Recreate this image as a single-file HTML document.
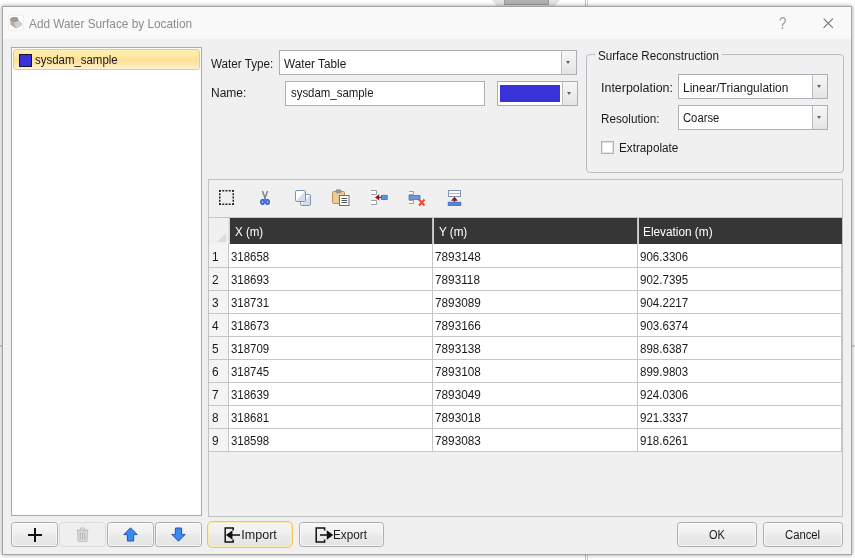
<!DOCTYPE html>
<html><head><meta charset="utf-8"><title>Add Water Surface by Location</title>
<style>
*{box-sizing:border-box;margin:0;padding:0}
html,body{width:855px;height:560px;overflow:hidden;background:#fff}
body{font-family:"Liberation Sans",sans-serif;font-size:12.5px;color:#1a1a1a}
#root{position:absolute;left:0;top:0;width:855px;height:560px;will-change:transform}
.abs{position:absolute}
#dlg{left:2px;top:6px;width:850px;height:549px;background:#f0f0f0;border:1px solid #a6a6a6;box-shadow:0 0 4px rgba(0,0,0,.42)}
#title{left:3px;top:7px;width:848px;height:32px;background:#f9f9f9}
.t{position:absolute;white-space:nowrap;line-height:16px;transform-origin:0 0}
.box{position:absolute;background:#fff;border:1px solid #abb0b8}
.btn{position:absolute;border:1px solid #a9aeb6;border-radius:3.5px;background:linear-gradient(#f5f5f5,#f0f0f0 44%,#e9e9e9 56%,#e5e5e5);height:25px;top:522px;box-shadow:inset 0 0 0 1px rgba(255,255,255,.6)}
.combo{position:absolute;background:#fff;border:1px solid #abb0b8;height:25px}
.dd{position:absolute;right:0;top:0;bottom:0;width:15px;border-left:1px solid #b9bdc4;background:linear-gradient(#f6f6f6,#eee 50%,#e4e4e4)}
.dd:after{content:"";position:absolute;left:4.2px;top:9.6px;border:2.8px solid transparent;border-top:3.3px solid #606060;border-bottom:0}
table{position:absolute;left:209px;top:218px;border-collapse:separate;border-spacing:0;table-layout:fixed;width:633px}
td,th{height:23px;padding:1px 0 0 2px;text-align:left;font-weight:normal;font-size:12.5px;overflow:hidden;white-space:nowrap;background:#fff;border-right:1px solid #c6c6c6;border-bottom:1px solid #c6c6c6}
tr.r1 td{height:24px}
th{background:#363636;height:26px;border:0;border-left:1px solid #d2d2d2;border-right:1px solid #bdbdbd;padding:0}
th.last{border-right:0}
td.rh{background:#f4f4f4;padding-left:3px}
th.rh{background:#f0f0f0;border-left:0;border-right:1px solid #e4e4e4}
td span{display:inline-block;transform-origin:0 50%;position:relative;top:.8px}
</style></head><body><div id="root">
<!-- background artifacts behind dialog -->
<div class="abs" style="left:485px;top:-64px;width:82px;height:82px;background:#e4e4e4;border-radius:50%"></div>
<div class="abs" style="left:504px;top:0;width:45px;height:5px;background:#b2b2b2;border:1px solid #9c9c9c;border-top:0"></div>
<div class="abs" style="left:585px;top:0;width:3px;height:6px;background:#fff;border-left:1px solid #c2c2c2;border-right:1px solid #d4d4d4"></div>
<div class="abs" style="left:585px;top:555px;width:3px;height:5px;background:#fff;border-left:1px solid #c2c2c2;border-right:1px solid #d4d4d4"></div>

<div class="abs" style="left:0;top:345px;width:855px;height:2px;background:#d3d7dd"></div>
<div id="dlg" class="abs"></div>
<div id="title" class="abs"></div>
<!-- app icon -->
<div class="abs" style="left:8px;top:15px;width:16px;height:16px;border-radius:2px;background:#fcfcfc;border:1px solid #eee"></div>
<svg class="abs" style="left:9px;top:16px" width="14" height="14" viewBox="0 0 14 14"><path d="M1.2 2.9 Q3 0.8 5.8 1.1 Q8.6 1 8.9 2.2 L9.7 4.9 L13 7 V9.3 L7 12.5 L1.4 8.7Z" fill="#b2b2b2"/><path d="M1.2 2.9 Q3 0.8 5.8 1.1 Q8.6 1 8.9 2.2 L9.7 4.9 L5 6.6 L1.2 4.6Z" fill="#9b9b9b"/><path d="M5 6.6 L9.7 4.9 L13 7 V9.3 L7 12.5Z" fill="#cfcfcf"/><path d="M2 5 L6.2 11.3" stroke="#f2a273" stroke-width=".9" fill="none"/></svg>
<div class="t" style="left:778.6px;top:14.1px;font-size:16px;color:#9a9a9a;line-height:20px;transform:scaleX(.82)">?</div>
<svg class="abs" style="left:823px;top:18px" width="11" height="11" viewBox="0 0 11 11"><path d="M0.6 0.6 L9.9 9.8 M9.9 0.6 L0.6 9.8" stroke="#777" stroke-width="1.15" fill="none"/></svg>

<!-- left list -->
<div class="box" style="left:11px;top:47px;width:191px;height:469px;border-color:#a3abb7"></div>
<div class="abs" style="left:13px;top:49px;width:187px;height:21px;border:1px solid #e6cb8a;border-radius:3px;background:linear-gradient(#ffeeae 0%,#feeaa6 28%,#fde098 52%,#fde7ad 75%,#fdf2d2 100%)"></div>
<div class="abs" style="left:19px;top:54px;width:13px;height:13px;background:#3832d8;border:1px solid #14143a"></div>

<!-- left bottom buttons -->
<div class="btn" style="left:11px;width:47px"></div>
<div class="btn" style="left:59px;width:47px;background:#efefef;border-color:#dcdcdc;box-shadow:none"></div>
<div class="btn" style="left:107px;width:47px"></div>
<div class="btn" style="left:155px;width:47px"></div>
<svg class="abs" style="left:28px;top:528px" width="14" height="14" viewBox="0 0 14 14"><path d="M7 0 V14 M0 7 H14" stroke="#111" stroke-width="2" fill="none"/></svg>
<svg class="abs" style="left:76px;top:527px" width="13" height="15" viewBox="0 0 13 15"><path d="M1.5 3.5 H11.5 L11 14.5 H2Z" fill="#d9d9d9" stroke="#c2c2c2"/><path d="M0.5 3 H12.5 M4.5 2.5 V1 H8.5 V2.5" stroke="#bdbdbd" fill="none"/><path d="M4.3 5.5 V12.5 M6.5 5.5 V12.5 M8.7 5.5 V12.5" stroke="#b5b5b5" fill="none"/></svg>
<svg class="abs" style="left:123px;top:527px" width="15" height="15" viewBox="0 0 15 15"><path d="M7.5 0.8 L14.2 7.6 H10.6 V14 H4.4 V7.6 H0.8Z" fill="#3a8af0" stroke="#1c58b8" stroke-width="1" stroke-linejoin="round"/></svg>
<svg class="abs" style="left:171px;top:527px" width="15" height="15" viewBox="0 0 15 15"><path d="M7.5 14.2 L14.2 7.4 H10.6 V1 H4.4 V7.4 H0.8Z" fill="#3a8af0" stroke="#1c58b8" stroke-width="1" stroke-linejoin="round"/></svg>

<!-- water type / name -->
<div class="combo" style="left:279px;top:50px;width:298px"><div class="dd"></div></div>
<div class="box" style="left:285px;top:81px;width:200px;height:25px"></div>
<div class="box" style="left:497px;top:81px;width:81px;height:25px;border-color:#a9aeb6"><div class="abs" style="left:2px;top:3px;width:60px;height:17px;background:#3832d8"></div><div class="dd"></div></div>

<!-- group box -->
<div class="abs" style="left:586px;top:54px;width:258px;height:119px;border:1px solid #b7bcc4;border-radius:4px"></div>
<div class="abs" style="left:595px;top:50px;width:127px;height:10px;background:#f0f0f0"></div>
<div class="t" style="left:597.60px;top:47.72px;font-size:12.5px;color:#1a1a1a;transform:scaleX(0.9315);">Surface Reconstruction</div>
<div class="combo" style="left:678px;top:74px;width:150px"><div class="dd"></div></div>
<div class="combo" style="left:678px;top:105px;width:150px"><div class="dd"></div></div>
<div class="abs" style="left:601px;top:141px;width:13px;height:13px;background:#fff;border:1px solid #b3b3b3;box-shadow:inset 0 0 0 1px #e4e4e4"></div>

<!-- table panel -->
<div class="abs" style="left:208px;top:179px;width:635px;height:338px;border:1px solid #c2c2c2;background:#f0f0f0"></div>
<div class="abs" style="left:209px;top:217px;width:633px;height:1px;background:#c6c6c6"></div>
<!-- toolbar icons -->
<svg class="abs" style="left:219px;top:190px" width="15" height="15" viewBox="0 0 15 15"><path d="M0 0.75 H15 M0 14.25 H15" stroke="#222" stroke-width="1.5" stroke-dasharray="2 1.25" fill="none"/><path d="M0.75 0 V15 M14.25 0 V15" stroke="#222" stroke-width="1.5" stroke-dasharray="2 1.25" fill="none"/></svg>
<svg class="abs" style="left:259px;top:190px" width="12" height="16" viewBox="0 0 12 16"><path d="M3.4 1 L7 10.5 M8.6 1 L5 10.5" stroke="#7b8592" stroke-width="1.5" fill="none"/><ellipse cx="3.5" cy="12" rx="1.7" ry="2.2" fill="#8fb0ee" stroke="#2a5cd0" stroke-width="1.5"/><ellipse cx="8.5" cy="12" rx="1.7" ry="2.2" fill="#8fb0ee" stroke="#2a5cd0" stroke-width="1.5"/></svg>
<svg class="abs" style="left:295px;top:190px" width="16" height="16" viewBox="0 0 16 16"><rect x="5.5" y="4.5" width="10" height="11" rx="1.5" fill="#fff" stroke="#7f93b5"/><path d="M15 5 V15 H6Z" fill="#d5dcea"/><rect x="0.5" y="0.5" width="10" height="11" rx="1.5" fill="#fff" stroke="#7f93b5"/><path d="M10 1 V11 H1Z" fill="#d5dcea"/></svg>
<svg class="abs" style="left:332px;top:189px" width="18" height="17" viewBox="0 0 18 17"><rect x="0.5" y="2.5" width="12" height="12" rx="1" fill="#eccb94" stroke="#b89452"/><rect x="4" y="0.8" width="5" height="3" rx="1" fill="#9a9a9a" stroke="#777" stroke-width=".6"/><rect x="7.5" y="6.5" width="9.5" height="10" fill="#fff" stroke="#6e6e6e"/><path d="M9.5 9.5 H15 M9.5 11.5 H15 M9.5 13.5 H15" stroke="#555" stroke-width="1"/></svg>
<svg class="abs" style="left:370px;top:189px" width="18" height="17" viewBox="0 0 18 17"><path d="M1 1.5 H6.5 V5.5 H1" fill="#fff" stroke="#9aa0aa"/><path d="M1 11.5 H6.5 V15.5 H1" fill="#fff" stroke="#9aa0aa"/><rect x="11.5" y="6.3" width="5.7" height="4.2" fill="#5b8fe0" stroke="#3b6cc0" stroke-width=".8"/><path d="M11.5 8.4 H7.5 M8.6 6.4 L6 8.4 L8.6 10.4Z" stroke="#8a1a1a" stroke-width="1.2" fill="#8a1a1a"/></svg>
<svg class="abs" style="left:408px;top:190px" width="18" height="17" viewBox="0 0 18 17"><path d="M1 1.5 H5.5 V4.5 H1" fill="#fff" stroke="#9aa0aa"/><path d="M1 10.5 H5.5 V13.5 H1" fill="#fff" stroke="#9aa0aa"/><rect x="1" y="5.5" width="11" height="4" fill="#6a97e0" stroke="#4a76c4" stroke-width=".8"/><path d="M11 9.5 L16.5 15.5 M16.5 9.5 L11 15.5" stroke="#f04a2a" stroke-width="2" fill="none"/></svg>
<svg class="abs" style="left:447px;top:189px" width="15" height="17" viewBox="0 0 15 17"><rect x="1.5" y="1.5" width="12" height="6" fill="#fff" stroke="#7f93b5"/><path d="M1.5 4.5 H13.5" stroke="#aab6cc"/><rect x="1.2" y="13.2" width="12.6" height="3.3" fill="#4f86e0" stroke="#356cc8" stroke-width=".8"/><path d="M7.5 13 V10 M5.4 11.2 L7.5 8.6 L9.6 11.2Z" stroke="#8a1a1a" stroke-width="1.2" fill="#8a1a1a"/></svg>

<table>
<colgroup><col style="width:20px"><col style="width:204px"><col style="width:205px"><col style="width:204px"></colgroup>
<tr><th class="rh"></th><th></th><th></th><th class="last"></th></tr>
<tr class="r1"><td class="rh"><span style="transform:scaleX(0.950)">1</span></td><td><span style="transform:scaleX(0.916)">318658</span></td><td><span style="transform:scaleX(0.942)">7893148</span></td><td><span style="transform:scaleX(0.924)">906.3306</span></td></tr>
<tr><td class="rh"><span style="transform:scaleX(0.950)">2</span></td><td><span style="transform:scaleX(0.916)">318693</span></td><td><span style="transform:scaleX(0.942)">7893118</span></td><td><span style="transform:scaleX(0.924)">902.7395</span></td></tr>
<tr><td class="rh"><span style="transform:scaleX(0.950)">3</span></td><td><span style="transform:scaleX(0.916)">318731</span></td><td><span style="transform:scaleX(0.942)">7893089</span></td><td><span style="transform:scaleX(0.924)">904.2217</span></td></tr>
<tr><td class="rh"><span style="transform:scaleX(0.950)">4</span></td><td><span style="transform:scaleX(0.916)">318673</span></td><td><span style="transform:scaleX(0.942)">7893166</span></td><td><span style="transform:scaleX(0.924)">903.6374</span></td></tr>
<tr><td class="rh"><span style="transform:scaleX(0.950)">5</span></td><td><span style="transform:scaleX(0.916)">318709</span></td><td><span style="transform:scaleX(0.942)">7893138</span></td><td><span style="transform:scaleX(0.924)">898.6387</span></td></tr>
<tr><td class="rh"><span style="transform:scaleX(0.950)">6</span></td><td><span style="transform:scaleX(0.916)">318745</span></td><td><span style="transform:scaleX(0.942)">7893108</span></td><td><span style="transform:scaleX(0.924)">899.9803</span></td></tr>
<tr><td class="rh"><span style="transform:scaleX(0.950)">7</span></td><td><span style="transform:scaleX(0.916)">318639</span></td><td><span style="transform:scaleX(0.942)">7893049</span></td><td><span style="transform:scaleX(0.924)">924.0306</span></td></tr>
<tr><td class="rh"><span style="transform:scaleX(0.950)">8</span></td><td><span style="transform:scaleX(0.916)">318681</span></td><td><span style="transform:scaleX(0.942)">7893018</span></td><td><span style="transform:scaleX(0.924)">921.3337</span></td></tr>
<tr><td class="rh"><span style="transform:scaleX(0.950)">9</span></td><td><span style="transform:scaleX(0.916)">318598</span></td><td><span style="transform:scaleX(0.942)">7893083</span></td><td><span style="transform:scaleX(0.924)">918.6261</span></td></tr>

</table>
<!-- header corner triangle -->
<svg class="abs" style="left:217px;top:233px" width="9" height="9" viewBox="0 0 9 9"><path d="M9 0 V9 H0Z" fill="#dcdcdc"/></svg>

<!-- bottom buttons -->
<div class="btn" style="left:207px;top:521px;width:86px;height:27px;border:1.6px solid #efc752;border-radius:5px;box-shadow:inset 0 0 0 1px #fbeab0"></div>
<div class="btn" style="left:299px;width:85px"></div>
<div class="btn" style="left:677px;width:80px"></div>
<div class="btn" style="left:763px;width:80px"></div>
<!-- import/export icons -->
<svg class="abs" style="left:224px;top:527px" width="17" height="16" viewBox="0 0 17 16"><path d="M9.2 3.5 V0.9 H1.2 V15.1 H9.2 V12.5" stroke="#111" stroke-width="1.5" fill="none"/><path d="M16 8 H6 M7.6 5 L3.4 8 L7.6 11Z" stroke="#111" stroke-width="1.7" fill="#111" stroke-linejoin="miter"/></svg>
<svg class="abs" style="left:315px;top:527px" width="18" height="16" viewBox="0 0 18 16"><path d="M9.6 3.5 V0.9 H1.2 V15.1 H9.6 V12.5" stroke="#111" stroke-width="1.5" fill="none"/><path d="M5 8 H14 M12.6 5 L16.8 8 L12.6 11Z" stroke="#111" stroke-width="1.7" fill="#111" stroke-linejoin="miter"/></svg>

<div class="t" style="left:28.80px;top:16.25px;font-size:13px;color:#8c8c8c;transform:scaleX(0.9087);">Add Water Surface by Location</div>
<div class="t" style="left:34.84px;top:52.42px;font-size:12.5px;color:#1a1a1a;transform:scaleX(0.9154);">sysdam_sample</div>
<div class="t" style="left:210.77px;top:55.92px;font-size:12.5px;color:#1a1a1a;transform:scaleX(0.9333);">Water Type:</div>
<div class="t" style="left:283.76px;top:55.92px;font-size:12.5px;color:#1a1a1a;transform:scaleX(0.9425);">Water Table</div>
<div class="t" style="left:210.64px;top:85.42px;font-size:12.5px;color:#1a1a1a;transform:scaleX(0.9612);">Name:</div>
<div class="t" style="left:290.54px;top:85.42px;font-size:12.5px;color:#1a1a1a;transform:scaleX(0.9132);">sysdam_sample</div>
<div class="t" style="left:600.66px;top:79.92px;font-size:12.5px;color:#1a1a1a;transform:scaleX(0.9957);">Interpolation:</div>
<div class="t" style="left:682.94px;top:79.92px;font-size:12.5px;color:#1a1a1a;transform:scaleX(0.9580);">Linear/Triangulation</div>
<div class="t" style="left:600.96px;top:110.92px;font-size:12.5px;color:#1a1a1a;transform:scaleX(0.9355);">Resolution:</div>
<div class="t" style="left:683.23px;top:110.42px;font-size:12.5px;color:#1a1a1a;transform:scaleX(0.9000);">Coarse</div>
<div class="t" style="left:618.96px;top:140.12px;font-size:12.5px;color:#1a1a1a;transform:scaleX(0.9377);">Extrapolate</div>
<div class="t" style="left:241.35px;top:526.92px;font-size:12.5px;color:#1a1a1a;transform:scaleX(1.0000);">Import</div>
<div class="t" style="left:332.81px;top:526.92px;font-size:12.5px;color:#1a1a1a;transform:scaleX(0.9386);">Export</div>
<div class="t" style="left:708.76px;top:526.92px;font-size:12.5px;color:#1a1a1a;transform:scaleX(0.8812);">OK</div>
<div class="t" style="left:785.02px;top:526.92px;font-size:12.5px;color:#1a1a1a;transform:scaleX(0.9020);">Cancel</div>
<div class="t" style="left:234.54px;top:224.42px;font-size:12.5px;color:#fff;transform:scaleX(0.9231);">X (m)</div>
<div class="t" style="left:438.93px;top:224.42px;font-size:12.5px;color:#fff;transform:scaleX(0.9310);">Y (m)</div>
<div class="t" style="left:643.26px;top:224.42px;font-size:12.5px;color:#fff;transform:scaleX(0.9449);">Elevation (m)</div>
</div></body></html>
